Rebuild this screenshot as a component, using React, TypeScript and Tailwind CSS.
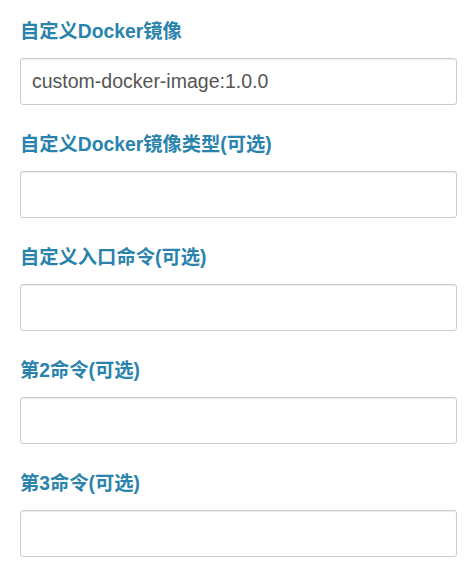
const FIELDS = [
  { label: '自定义Docker镜像', value: 'custom-docker-image:1.0.0' },
  { label: '自定义Docker镜像类型(可选)', value: '' },
  { label: '自定义入口命令(可选)', value: '' },
  { label: '第2命令(可选)', value: '' },
  { label: '第3命令(可选)', value: '' },
]

export default function App() {
  return (
    <div
      className="min-h-[577px] bg-white pl-5 pr-[17px] pt-[20px]"
      style={{ fontFamily: '"Liberation Sans", "Noto Sans CJK SC", sans-serif' }}
    >
      {FIELDS.map((f) => (
        <div key={f.label} className="mb-[28px]">
          <label className="block text-[19.3px] leading-[24px] font-bold text-[#2a83ac] mb-[14px]">
            {f.label}
          </label>
          <input
            type="text"
            defaultValue={f.value}
            className="block w-full h-[47px] px-[11px] text-[19.5px] text-[#555] bg-white border border-[#ccc] rounded-[3px] shadow-[inset_0_1px_1px_rgba(0,0,0,0.075)] outline-none"
          />
        </div>
      ))}
    </div>
  )
}
